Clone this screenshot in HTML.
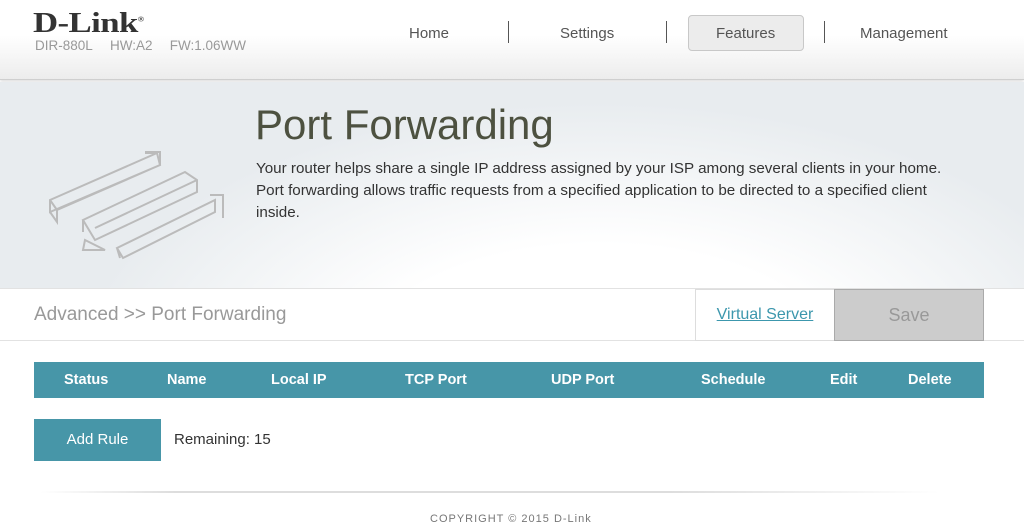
<!DOCTYPE html>
<html><head><style>
*{margin:0;padding:0;box-sizing:border-box}
body{width:1024px;height:517px;overflow:hidden;font-family:"Liberation Sans",sans-serif;background:#fff;position:relative}
.hdr{position:absolute;left:0;top:0;width:1024px;height:80px;background:linear-gradient(#fff 0,#fff 35px,#ececec 80px);border-bottom:1px solid #cfcfcf;box-shadow:0 2px 3px rgba(0,0,0,.12)}
.logo{position:absolute;left:33px;top:7px;font-family:"Liberation Serif",serif;font-weight:bold;font-size:29px;color:#333;letter-spacing:-0.5px;transform:scaleX(1.2);transform-origin:left top}
.model{position:absolute;left:35px;top:38px;font-size:13.5px;color:#999;word-spacing:2px}
.nav{position:absolute;top:25px;font-size:15px;color:#555}
.sep{position:absolute;top:21px;width:1px;height:22px;background:#555}
.feat{position:absolute;left:688px;top:15px;width:116px;height:36px;border:1px solid #c8c8c8;border-radius:4px;background:#ececec}
.ban{position:absolute;left:0;top:82px;width:1024px;height:206px;background:radial-gradient(ellipse 520px 260px at 600px 280px,#fff 0,#fff 45%,#e8ecef 100%)}
h1{position:absolute;left:255px;top:101px;font-weight:normal;font-size:42px;color:#4d5140}
.desc{position:absolute;left:256px;top:158px;width:714px;font-size:15.2px;line-height:22px;color:#333}
.bc{position:absolute;left:0;top:288px;width:1024px;height:53px;border-top:1px solid #e2e2e2;border-bottom:1px solid #e2e2e2;background:#fff}
.bct{position:absolute;left:34px;top:304px;font-size:19px;color:#999}
.vs{position:absolute;left:695px;top:289px;width:140px;height:52px;border:1px solid #ddd;background:#fff;text-align:center;line-height:50px;font-size:16px;color:#3c97ad;text-decoration:underline}
.save{position:absolute;left:834px;top:289px;width:150px;height:52px;border:1px solid #aaa;background:#ccc;text-align:center;line-height:50px;font-size:18px;color:#999}
.th{position:absolute;left:34px;top:362px;width:950px;height:36px;background:#4796a8;color:#fff;font-weight:bold;font-size:14.5px}
.th span{position:absolute;top:10px}
.add{position:absolute;left:34px;top:419px;width:127px;height:42px;background:#4796a8;color:#fff;font-size:15px;text-align:center;line-height:42px}
.rem{position:absolute;left:174px;top:431px;font-size:15px;color:#333}
.foot{position:absolute;left:40px;top:491px;width:900px;height:2px;background:linear-gradient(90deg,rgba(220,220,220,0),#ddd 15%,#ddd 70%,rgba(220,220,220,0))}
.copy{position:absolute;left:430px;top:513px;font-size:11px;color:#777;letter-spacing:1px}
</style></head><body>
<div class="hdr"></div>
<div class="logo">D-Link<sup style="font-size:7px">®</sup></div>
<div class="model">DIR-880L&nbsp;&nbsp; HW:A2&nbsp;&nbsp; FW:1.06WW</div>
<div class="feat"></div>
<div class="nav" style="left:409px">Home</div>
<div class="sep" style="left:508px"></div>
<div class="nav" style="left:560px">Settings</div>
<div class="sep" style="left:666px"></div>
<div class="nav" style="left:716px">Features</div>
<div class="sep" style="left:824px"></div>
<div class="nav" style="left:860px">Management</div>
<div class="ban"></div>
<svg style="position:absolute;left:45px;top:150px" width="190" height="120" viewBox="0 0 190 120" fill="none" stroke="#bbb" stroke-width="2">
<path d="M5 50 L112 3 L115 15 L5 62 Z M5 50 L12 60 L12 72 L5 62 M12 60 L115 15 M112 3 L100 3 M115 15 L115 2 L100 2"/>
<path d="M38 70 L140 22 L152 30 L152 42 L50 90 Z M50 78 L152 30 M38 70 L38 82 M40 90 L60 100 L38 100 Z"/>
<path d="M72 98 L170 50 L170 62 L78 108 Z M75 108 L72 98 M165 45 L178 45 L178 68"/>
</svg>
<h1>Port Forwarding</h1>
<div class="desc">Your router helps share a single IP address assigned by your ISP among several clients in your home. Port forwarding allows traffic requests from a specified application to be directed to a specified client inside.</div>
<div class="bc"></div>
<div class="bct">Advanced &gt;&gt; Port Forwarding</div>
<div class="vs">Virtual Server</div>
<div class="save">Save</div>
<div class="th">
<span style="left:30px">Status</span><span style="left:133px">Name</span><span style="left:237px">Local IP</span><span style="left:371px">TCP Port</span><span style="left:517px">UDP Port</span><span style="left:667px">Schedule</span><span style="left:796px">Edit</span><span style="left:874px">Delete</span>
</div>
<div class="add">Add Rule</div>
<div class="rem">Remaining: 15</div>
<div class="foot"></div>
<div class="copy">COPYRIGHT © 2015 D-Link</div>
</body></html>
